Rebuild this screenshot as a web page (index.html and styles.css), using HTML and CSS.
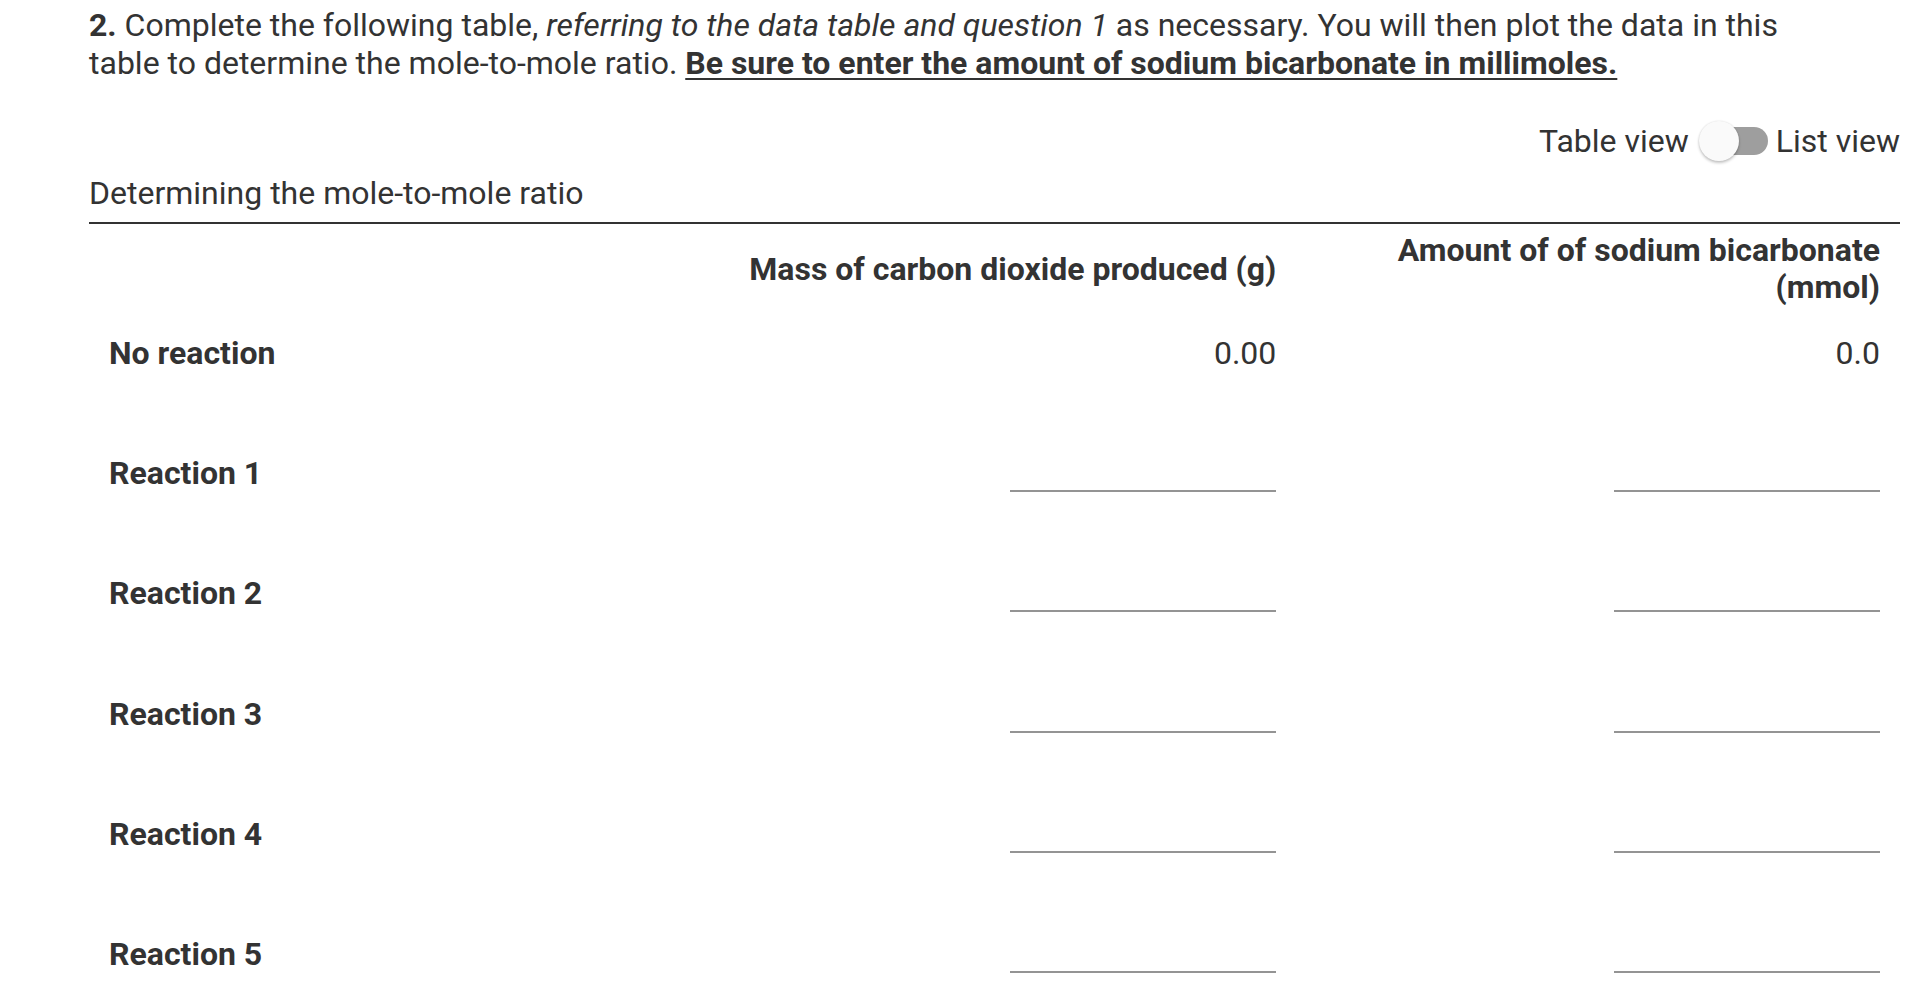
FILE: index.html
```html
<!DOCTYPE html>
<html lang="en">
<head>
<meta charset="utf-8">
<title>Determining the mole-to-mole ratio</title>
<link rel="stylesheet" href="styles.css">
</head>
<body>
<div class="page">
  <p class="question"><b>2.</b> Complete the following table, <i>referring to the data table and question 1</i> as necessary. You will then plot the data in this table to determine the mole-to-mole ratio. <b class="emph">Be sure to enter the amount of sodium bicarbonate in millimoles.</b></p>

  <div class="view-toggle">
    <span class="toggle-label">Table view</span>
    <span class="switch" role="switch" aria-checked="false">
      <span class="track"></span>
      <span class="thumb"></span>
    </span>
    <span class="toggle-label">List view</span>
  </div>

  <div class="table-title">Determining the mole-to-mole ratio</div>

  <table class="data">
    <thead>
      <tr>
        <th class="corner"></th>
        <th>Mass of carbon dioxide produced (g)</th>
        <th>Amount of of sodium bicarbonate (mmol)</th>
      </tr>
    </thead>
    <tbody>
      <tr>
        <th>No reaction</th>
        <td>0.00</td>
        <td>0.0</td>
      </tr>
      <tr>
        <th>Reaction 1</th>
        <td><input class="entry" type="text" aria-label="Mass of carbon dioxide, reaction 1"></td>
        <td><input class="entry" type="text" aria-label="Sodium bicarbonate, reaction 1"></td>
      </tr>
      <tr>
        <th>Reaction 2</th>
        <td><input class="entry" type="text" aria-label="Mass of carbon dioxide, reaction 2"></td>
        <td><input class="entry" type="text" aria-label="Sodium bicarbonate, reaction 2"></td>
      </tr>
      <tr>
        <th>Reaction 3</th>
        <td><input class="entry" type="text" aria-label="Mass of carbon dioxide, reaction 3"></td>
        <td><input class="entry" type="text" aria-label="Sodium bicarbonate, reaction 3"></td>
      </tr>
      <tr>
        <th>Reaction 4</th>
        <td><input class="entry" type="text" aria-label="Mass of carbon dioxide, reaction 4"></td>
        <td><input class="entry" type="text" aria-label="Sodium bicarbonate, reaction 4"></td>
      </tr>
      <tr>
        <th>Reaction 5</th>
        <td><input class="entry" type="text" aria-label="Mass of carbon dioxide, reaction 5"></td>
        <td><input class="entry" type="text" aria-label="Sodium bicarbonate, reaction 5"></td>
      </tr>
    </tbody>
  </table>
</div>
</body>
</html>
```
FILE: styles.css
```css
html, body {
  margin: 0;
  padding: 0;
  background: #ffffff;
}

body {
  font-family: Roboto, "Noto Sans", "Liberation Sans", sans-serif;
  color: #333333;
}

.page {
  padding: 6px 28px 0 89px;
}

.question {
  margin: 0;
  max-width: 1760px;
  font-size: 32px;
  line-height: 38px;
}

.question b {
  font-weight: 700;
}

.question .emph {
  text-decoration: underline;
  text-decoration-thickness: 2px;
  text-underline-offset: 4px;
}

.view-toggle {
  display: flex;
  justify-content: flex-end;
  align-items: center;
  margin-top: 39px;
  height: 40px;
}

.toggle-label {
  font-size: 32px;
  line-height: 40px;
}

.switch {
  position: relative;
  display: block;
  width: 69px;
  height: 40px;
  margin: 0 8px 0 10px;
}

.track {
  position: absolute;
  left: 4px;
  right: 0;
  top: 6px;
  height: 28px;
  border-radius: 14px;
  background: #9e9e9e;
}

.thumb {
  position: absolute;
  left: 0;
  top: 0;
  width: 40px;
  height: 40px;
  border-radius: 50%;
  background: #fafafa;
  box-shadow: 0 2px 3px rgba(0, 0, 0, 0.22), 0 0 2px rgba(0, 0, 0, 0.12);
}

.table-title {
  margin-top: 13px;
  font-size: 32px;
  line-height: 38px;
  padding-bottom: 10px;
  border-bottom: 2px solid #333333;
}

.data {
  width: 100%;
  table-layout: fixed;
  border-collapse: collapse;
}

.data thead th {
  padding: 8px 20px 7px;
  vertical-align: middle;
  text-align: right;
  font-size: 32px;
  line-height: 37px;
  font-weight: 700;
}

.data tbody tr {
  height: 120.2px;
}

.data tbody th,
.data tbody td {
  padding: 22px 20px 0;
  vertical-align: top;
  font-size: 32px;
  line-height: 37px;
}

.data tbody th {
  text-align: left;
  font-weight: 700;
}

.data tbody td {
  text-align: right;
  font-weight: 400;
}

.entry {
  display: block;
  margin-left: auto;
  width: 266px;
  height: 37px;
  box-sizing: border-box;
  padding: 0;
  border: none;
  border-bottom: 2px solid #949494;
  background: transparent;
  font-family: inherit;
  font-size: 32px;
  color: #333333;
  text-align: right;
  outline: none;
}
```
